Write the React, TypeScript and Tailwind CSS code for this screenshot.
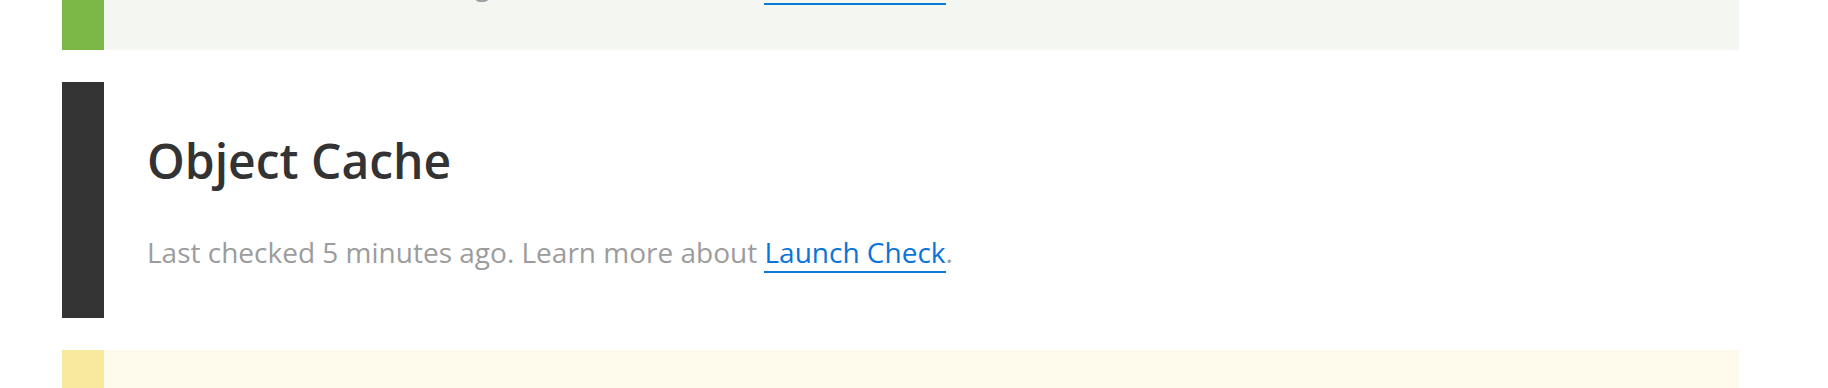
import React from "react";

function Card({ bar, bg, title, minutes }: { bar: string; bg: string; title: string; minutes: string }) {
  return (
    <div className={`flex ${bg}`}>
      <div className={`w-[42px] shrink-0 ${bar}`} />
      <div className="pl-[43px] pt-[50px] pb-[45px]">
        <h2 className="text-[48px] leading-[57.6px] font-semibold text-[#333333]">{title}</h2>
        <p className="mt-[42px] text-[28px] leading-[42px] text-[#9c9c9c]">
          Last checked {minutes} minutes ago. Learn more about{" "}
          <a href="#" className="text-[#0a74d8] border-b-2 border-[#0a7ad8]">
            Launch Check
          </a>
          .
        </p>
      </div>
    </div>
  );
}

export default function App() {
  return (
    <div
      className="w-[1828px] h-[388px] overflow-hidden bg-white"
      style={{ fontFamily: '"Open Sans", "Noto Sans", sans-serif' }}
    >
      <div className="ml-[62px] w-[1677px] -mt-[187px] flex flex-col gap-[32px]">
        <Card bar="bg-[#7cb848]" bg="bg-[#f4f6f1]" title="Page Cache" minutes="5" />
        <Card bar="bg-[#333333]" bg="bg-white" title="Object Cache" minutes="5" />
        <div className="flex bg-[#fdf9eb] h-[237px]">
          <div className="w-[42px] shrink-0 bg-[#f8ea9c]" />
        </div>
      </div>
    </div>
  );
}
